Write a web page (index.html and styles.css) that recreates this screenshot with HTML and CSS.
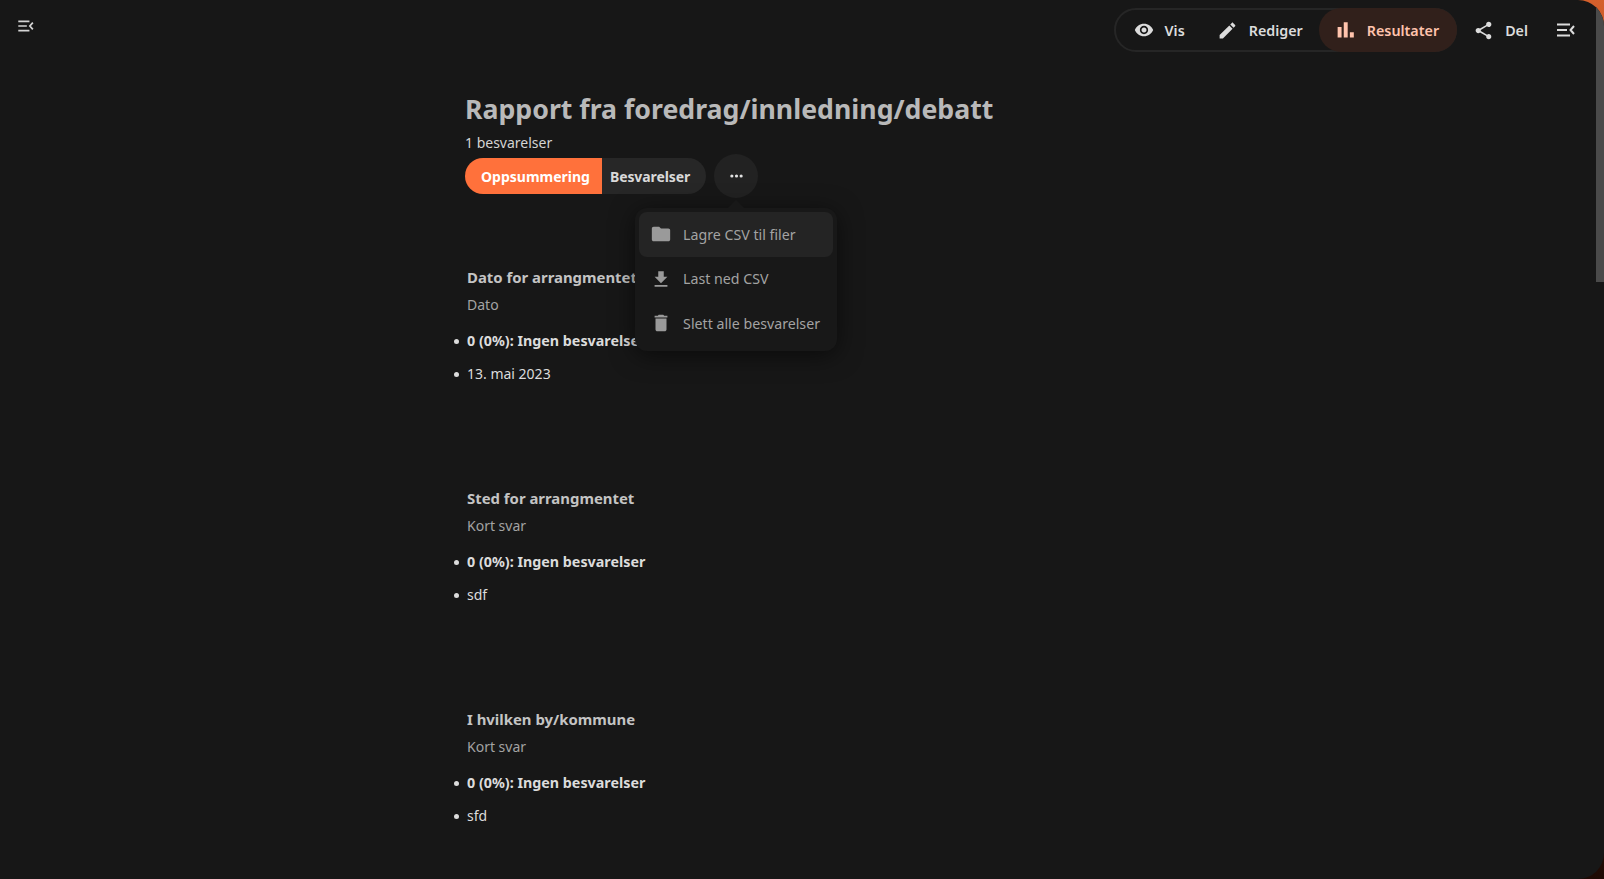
FILE: index.html
```html
<!DOCTYPE html>
<html lang="no">
<head>
<meta charset="utf-8">
<title>Rapport fra foredrag/innledning/debatt</title>
<link rel="stylesheet" href="styles.css">
</head>
<body>
<div class="app">
  <div class="thumb"></div>
  <header class="topbar">
    <button class="icon-btn left-toggle" aria-label="Meny">
      <svg class="ic-menu" viewBox="0 0 18 14"><path d="M0 1.500h13M0 7h10M0 12.500h13M17 3 13.500 7l3.500 4" fill="none" stroke="currentColor" stroke-width="2"/></svg>
    </button>
    <nav class="actions">
      <div class="seg">
        <a class="seg-item vis">
          <svg class="ic" viewBox="0 0 24 24"><path fill="currentColor" d="M12 4.500C7 4.500 2.730 7.610 1 12c1.730 4.390 6 7.500 11 7.500s9.270-3.110 11-7.500c-1.730-4.390-6-7.500-11-7.500zM12 17c-2.760 0-5-2.240-5-5s2.240-5 5-5 5 2.240 5 5-2.240 5-5 5zm0-8c-1.660 0-3 1.340-3 3s1.340 3 3 3 3-1.340 3-3-1.340-3-3-3z"/></svg>
          <span>Vis</span>
        </a>
        <a class="seg-item edit">
          <svg class="ic" viewBox="0 0 24 24"><path fill="currentColor" d="M3 17.250V21h3.750L17.810 9.940l-3.750-3.750L3 17.250zM20.710 7.040c.39-.39.39-1.020 0-1.410l-2.340-2.340c-.39-.39-1.020-.39-1.410 0l-1.830 1.830 3.750 3.750 1.830-1.830z"/></svg>
          <span>Rediger</span>
        </a>
        <a class="seg-item res">
          <svg class="ic" viewBox="0 0 24 24"><path fill="currentColor" d="M3 8h4.500v12H3zM10 2.500h4.500V20H10zM17 14h4.500v6H17z"/></svg>
          <span>Resultater</span>
        </a>
      </div>
      <a class="share">
        <svg class="ic" viewBox="0 0 24 24"><path fill="currentColor" d="M18 16.080c-.76 0-1.440.3-1.960.77L8.910 12.700c.05-.23.090-.46.090-.7s-.04-.47-.09-.7l7.050-4.110c.54.5 1.250.81 2.040.81 1.660 0 3-1.340 3-3s-1.340-3-3-3-3 1.340-3 3c0 .24.040.47.090.7L8.040 9.810C7.500 9.310 6.790 9 6 9c-1.660 0-3 1.340-3 3s1.340 3 3 3c.79 0 1.500-.31 2.040-.81l7.120 4.160c-.05.21-.08.43-.08.650 0 1.610 1.310 2.920 2.920 2.920s2.920-1.310 2.920-2.920-1.310-2.920-2.920-2.920z"/></svg>
        <span>Del</span>
      </a>
      <button class="icon-btn right-toggle" aria-label="Meny">
        <svg class="ic-menu big" viewBox="0 0 18 14"><path d="M0 1.500h13M0 7h10M0 12.500h13M17 3 13.500 7l3.500 4" fill="none" stroke="currentColor" stroke-width="2"/></svg>
      </button>
    </nav>
  </header>

  <main class="content">
    <h1 class="title">Rapport fra foredrag/innledning/debatt</h1>
    <p class="count">1 besvarelser</p>
    <div class="tabs-row">
      <div class="tabs">
        <span class="tab active">Oppsummering</span>
        <span class="tab">Besvarelser</span>
      </div>
      <div class="more-wrap">
        <button class="more" aria-label="Mer">
          <svg viewBox="0 0 14 4" class="dots"><circle cx="2" cy="2" r="1.700"/><circle cx="7" cy="2" r="1.700"/><circle cx="12" cy="2" r="1.700"/></svg>
        </button>
        <div class="menu">
          <div class="menu-item hover">
            <svg class="mi" viewBox="0 0 24 24"><path fill="currentColor" d="M10 4H4c-1.100 0-2 .9-2 2v12c0 1.100.9 2 2 2h16c1.100 0 2-.9 2-2V8c0-1.100-.9-2-2-2h-8l-2-2z"/></svg>
            <span>Lagre CSV til filer</span>
          </div>
          <div class="menu-item">
            <svg class="mi" viewBox="0 0 24 24"><path fill="currentColor" d="M19 9.500h-4V3.500H9v6H5l7 7 7-7zM5 18.500v2h14v-2H5z"/></svg>
            <span>Last ned CSV</span>
          </div>
          <div class="menu-item">
            <svg class="mi" viewBox="0 0 24 24"><path fill="currentColor" d="M6 19c0 1.100.9 2 2 2h8c1.100 0 2-.9 2-2V7H6v12zM19 4h-3.500l-1-1h-5l-1 1H5v2h14V4z"/></svg>
            <span>Slett alle besvarelser</span>
          </div>
        </div>
      </div>
    </div>

    <section class="question">
      <h2>Dato for arrangmentet</h2>
      <p class="type">Dato</p>
      <ul>
        <li><strong>0 (0%): Ingen besvarelser</strong></li>
        <li>13. mai 2023</li>
      </ul>
    </section>
    <section class="question">
      <h2>Sted for arrangmentet</h2>
      <p class="type">Kort svar</p>
      <ul>
        <li><strong>0 (0%): Ingen besvarelser</strong></li>
        <li>sdf</li>
      </ul>
    </section>
    <section class="question">
      <h2>I hvilken by/kommune</h2>
      <p class="type">Kort svar</p>
      <ul>
        <li><strong>0 (0%): Ingen besvarelser</strong></li>
        <li>sfd</li>
      </ul>
    </section>
  </main>
</div>
</body>
</html>
```

FILE: styles.css
```css
* { box-sizing: border-box; }
html, body { height: 100%; }
body {
  margin: 0;
  overflow: hidden;
  background: linear-gradient(180deg, #d5602c 0, #5a2410 45%, #1e0a04 100%);
  font-family: "Noto Sans", "Open Sans", sans-serif;
  color: #d8d8d8;
}
.app {
  position: relative;
  height: 879px;
  overflow: hidden;
  background: #171717;
  border-radius: 0 26px 26px 0;
}
.thumb {
  position: absolute;
  top: 0;
  right: 0;
  width: 8px;
  height: 282px;
  background: #4a4a4a;
}
button { font: inherit; color: inherit; background: none; border: 0; padding: 0; }
.topbar {
  display: flex;
  justify-content: space-between;
  align-items: flex-start;
  height: 60px;
  padding: 8px 29px 0 18px;
}
.left-toggle { display: flex; padding-top: 12px; color: #d5d5d5; }
.ic-menu { width: 16px; height: 12px; }
.ic-menu.big { width: 18px; height: 14px; }
.actions { display: flex; align-items: center; font-size: 14.3px; font-weight: 600; }
.seg {
  display: flex;
  height: 44px;
  border: 2px solid #262626;
  border-radius: 22px;
  align-items: stretch;
}
.seg-item { display: flex; align-items: center; gap: 11px; color: #dcdcdc; }
.vis { padding: 0 32px 0 18px; }
.edit { padding: 0 18px 0 0; }
.res {
  margin: -2px;
  padding: 0 18px 0 16px;
  border-radius: 22px;
  background: #31201b;
  color: #ffc3ad;
}
.ic { width: 21px; height: 21px; flex: none; }
.vis .ic { width: 20px; height: 20px; }
.share { display: flex; align-items: center; gap: 11px; margin-left: 16px; color: #dcdcdc; }
.right-toggle { display: flex; margin-left: 29px; color: #dcdcdc; }

.content { padding: 30px 0 0 465px; width: 1300px; }
.title {
  margin: 0;
  font-size: 26.7px;
  line-height: 38px;
  font-weight: 700;
  color: #b9b9b9;
}
.count { margin: 4px 0 0; font-size: 14px; line-height: 22px; font-weight: 400; color: #d4d4d4; }
.tabs-row { display: flex; align-items: center; gap: 8px; }
.tabs { display: flex; height: 36px; border-radius: 18px; overflow: hidden; font-size: 14px; font-weight: 700; letter-spacing: -0.1px; }
.tab { display: flex; align-items: center; padding: 0 16px 0 8px; background: #272727; color: #d9d9d9; }
.tab.active { padding: 0 12px 0 16px; background: #ff713b; color: #fff; letter-spacing: 0; }
.more-wrap { position: relative; }
.more {
  display: flex;
  align-items: center;
  justify-content: center;
  width: 44px;
  height: 44px;
  border-radius: 50%;
  background: #222;
}
.dots { width: 13px; height: 4px; fill: #e2e2e2; }
.menu {
  position: absolute;
  z-index: 2;
  top: 54px;
  left: -79px;
  width: 202px;
  padding: 4px 4px 5px;
  border-radius: 12px;
  background: #181818;
  box-shadow: 0 4px 24px rgba(0,0,0,.55);
  font-size: 14.2px;
  color: #a3a3a3;
}
.menu::before {
  content: "";
  position: absolute;
  top: -8px;
  left: 93px;
  border: 8px solid transparent;
  border-top: 0;
  border-bottom-color: #181818;
}
.menu-item { display: flex; align-items: center; gap: 11px; height: 44.6px; padding: 0 11px; border-radius: 8px; white-space: nowrap; }
.menu-item.hover { background: #242424; }
.mi { width: 22px; height: 22px; flex: none; color: #9a9a9a; }

.question { height: 221px; padding-left: 2px; }
.tabs-row + .question { margin-top: 68px; }
.question h2 { margin: 0; font-size: 14.9px; line-height: 22px; font-weight: 700; color: #c4c4c4; }
.type { margin: 6px 0 0; font-size: 14px; line-height: 22px; color: #a3a3a3; }
ul { margin: 14px 0 0; padding: 0; list-style: none; font-size: 14px; }
li { position: relative; line-height: 22px; margin-bottom: 11px; color: #dcdcdc; }
li::before {
  content: "";
  position: absolute;
  left: -13px;
  top: 9px;
  width: 5px;
  height: 5px;
  border-radius: 50%;
  background: #dcdcdc;
}
strong { font-size: 14.3px; font-weight: 700; }
```
